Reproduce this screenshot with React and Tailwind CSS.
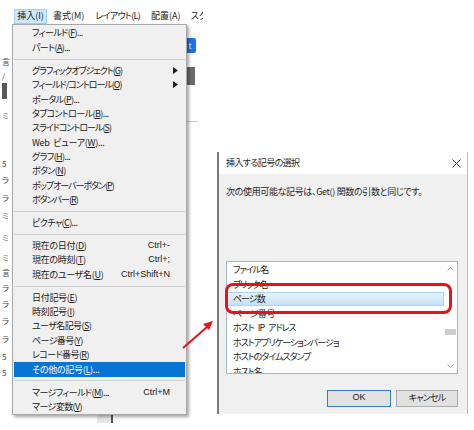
import React from 'react';

const jp = "font-['Noto_Sans_CJK_JP','Noto_Sans',sans-serif] [font-feature-settings:'palt']";

// the reference font has narrow katakana; tighten kana-heavy strings more
function tr(s) {
  const kana = (s.match(/[ァ-ヶー]/g) || []).length;
  const r = kana / s.length;
  if (r > 0.6) return 'tracking-[-1px]';
  if (r > 0.3) return 'tracking-[-0.6px]';
  return 'tracking-[-0.3px]';
}

const menu = [
  { t: 'フィールド', k: 'F', dots: true },
  { t: 'パート', k: 'A', dots: true },
  'sep',
  { t: 'グラフィックオブジェクト', k: 'G', sub: true },
  { t: 'フィールド/コントロール', k: 'O', sub: true },
  { t: 'ポータル', k: 'P', dots: true },
  { t: 'タブコントロール', k: 'B', dots: true },
  { t: 'スライドコントロール', k: 'S' },
  { t: 'Web ビューア', k: 'W', dots: true },
  { t: 'グラフ', k: 'H', dots: true },
  { t: 'ボタン', k: 'N' },
  { t: 'ポップオーバーボタン', k: 'P' },
  { t: 'ボタンバー', k: 'R' },
  'sep',
  { t: 'ピクチャ', k: 'C', dots: true },
  'sep',
  { t: '現在の日付', k: 'D', sc: 'Ctrl+-' },
  { t: '現在の時刻', k: 'T', sc: 'Ctrl+;' },
  { t: '現在のユーザ名', k: 'U', sc: 'Ctrl+Shift+N' },
  'sep',
  { t: '日付記号', k: 'E' },
  { t: '時刻記号', k: 'I' },
  { t: 'ユーザ名記号', k: 'S' },
  { t: 'ページ番号', k: 'Y' },
  { t: 'レコード番号', k: 'R' },
  { t: 'その他の記号', k: 'L', dots: true, active: true },
  'sep',
  { t: 'マージフィールド', k: 'M', dots: true, sc: 'Ctrl+M' },
  { t: 'マージ変数', k: 'V' },
];

const symbols = [
  'ファイル名',
  'ブリック名',
  'ページ数',
  'ページ番号',
  'ホスト IP アドレス',
  'ホストアプリケーションバージョ',
  'ホストのタイムスタンプ',
  'ホスト名',
];

// fragments of the window behind the menu
const edge = [
  { ch: '言', cls: 'h-[15px] mt-[30px]' },
  { ch: '/', cls: 'h-[14px]' },
  { bar: true },
  { ch: 'ミ', cls: 'h-[14px] mt-[10px]' },
  { ch: '5', cls: 'h-[14px] mt-[34px]' },
  { ch: 'ラ', cls: 'h-[18px]' },
  { ch: 'ラ', cls: 'h-[18px]' },
  { ch: 'ミ', cls: 'h-[18px]' },
  { ch: 'ミ', cls: 'h-[26px]' },
  { ch: 'ミ', cls: 'h-[14px]' },
  { ch: '言', cls: 'h-[15px]' },
  { ch: 'ラ', cls: 'h-[16px]' },
  { ch: 'ラ', cls: 'h-[16px]' },
  { ch: 'ラ', cls: 'h-[17px]' },
  { ch: 'ラ', cls: 'h-[20px]' },
  { ch: '5', cls: 'h-[16px]' },
  { ch: '5', cls: 'h-[15px]' },
];

function MenuRow({ item }) {
  const on = item.active;
  const label = `${item.t}(${item.k})${item.dots ? '...' : ''}`;
  return (
    <div
      className={`h-[14.4px] mx-px flex items-center pl-[18px] pr-[5px] ${
        on ? 'bg-[#0a73d6] text-white' : 'text-[#202020]'
      }`}
    >
      <span className={`whitespace-pre [word-spacing:2px] ${tr(label)}`}>
        {item.t}(<span className="underline underline-offset-1">{item.k}</span>){item.dots ? '...' : ''}
      </span>
      <span className="flex-1" />
      {item.sc && (
        <span className="font-['Liberation_Sans',sans-serif] text-[9px] pr-[10px] whitespace-nowrap">{item.sc}</span>
      )}
      {item.sub && (
        <svg width="5" height="7" viewBox="0 0 5 7" className="mr-[2px]">
          <path d="M0 0 L5 3.5 L0 7 Z" fill="#202020" />
        </svg>
      )}
    </div>
  );
}

export default function App() {
  return (
    <div className={`relative w-[474px] h-[430px] overflow-hidden bg-white text-[9px] ${jp}`}>
      {/* menu bar */}
      <div className="flex items-center h-[24px] pt-[8px] pl-[14px] text-[#222]">
        <div className="h-[15px] w-[33px] flex items-center justify-center bg-[#cce8ff] border border-[#99d1ff]">
          挿入(I)
        </div>
        <span className="ml-[6px]">書式(M)</span>
        <span className="ml-[11px] tracking-[-0.7px]">レイアウト(L)</span>
        <span className="ml-[11px]">配置(A)</span>
        <span className="ml-[10px] w-[12px] overflow-hidden whitespace-nowrap">スク</span>
      </div>

      {/* background window */}
      <div className="flex text-[#444]">
        <div className="w-[12px] flex flex-col overflow-hidden pl-[2px] text-[8px] leading-none">
          {edge.map((e, i) =>
            e.bar ? (
              <div key={i} className="w-[5px] h-[16px] bg-[#5a5a5a]" />
            ) : (
              <div key={i} className={`${e.cls} flex items-center`}>
                {e.ch}
              </div>
            )
          )}
        </div>
        <div className="ml-[172px] w-[14px] flex flex-col">
          <div className="mt-[14px] h-[15px] w-[12px] bg-[#1a73e8] rounded-r-[2px] flex items-center justify-center text-white text-[8px]">
            t
          </div>
          <div className="mt-[14px] h-[18px] w-[11px] bg-[#6a6a6a]" />
          <div className="mt-[36px] h-px w-[14px] bg-[#c8c8c8]" />
        </div>
      </div>
      <div className="absolute left-[97px] top-[413px] w-[16px] h-[10px] bg-[#e6e6e6] border-r-2 border-[#555]" />

      {/* insert menu */}
      <div className="absolute left-[12px] top-[24px] w-[175px] h-[391px] bg-[#f0f0f0] border border-[#a8a8a8] shadow-[2px_2px_3px_rgba(0,0,0,0.35)] pt-px">
        {menu.map((m, i) =>
          m === 'sep' ? (
            <div key={i} className="h-[8.5px] flex items-center mx-px">
              <div className="h-px w-full bg-[#cfcfcf]" />
            </div>
          ) : (
            <MenuRow key={i} item={m} />
          )
        )}
      </div>

      {/* dialog */}
      <div className="absolute left-[217px] top-[152px] w-[251px] h-[262px] flex flex-col border-l-2 border-l-[#7a7a7a] border-r border-r-[#bdbdbd] bg-[#f0f0f0] text-[#1e1e1e]">
        <div className="h-[22px] shrink-0 bg-white flex items-center justify-between pl-[7px] pr-[6px]">
          <span className="tracking-[-0.6px]">挿入する記号の選択</span>
          <svg width="9" height="9" viewBox="0 0 9 9">
            <path d="M0.5 0.5 L8.5 8.5 M8.5 0.5 L0.5 8.5" stroke="#333" strokeWidth="1" />
          </svg>
        </div>
        <div className="pl-[7px] pt-[11px] tracking-[-0.35px]">次の使用可能な記号は、Get() 関数の引数と同じです。</div>

        <div className="mt-[62px] ml-[7px] w-[232px] h-[113px] shrink-0 bg-white border border-[#a3b6c9] flex">
          <div className="flex-1 flex flex-col pt-px overflow-hidden">
            {symbols.map((s, i) => (
              <div
                key={i}
                className={`h-[14.5px] shrink-0 flex items-center whitespace-pre [word-spacing:3px] ${tr(s)} ${
                  i === 2
                    ? 'bg-gradient-to-b from-[#e8f4fc] to-[#c3e3f8] border border-[#a6d4f2] pl-[5px]'
                    : 'pl-[6px]'
                }`}
              >
                {s}
              </div>
            ))}
          </div>
          <div className="w-[13px] flex flex-col items-center">
            <div className="h-[14px] flex items-center">
              <svg width="7" height="4" viewBox="0 0 7 4">
                <path d="M0.5 3.5 L3.5 0.5 L6.5 3.5" stroke="#a6a6a6" fill="none" />
              </svg>
            </div>
            <div className="flex-1 w-full">
              <div className="mt-[53px] h-[6px] w-[11px] mx-auto bg-[#cdcdcd]" />
            </div>
            <div className="h-[14px] flex items-center">
              <svg width="7" height="4" viewBox="0 0 7 4">
                <path d="M0.5 0.5 L3.5 3.5 L6.5 0.5" stroke="#a6a6a6" fill="none" />
              </svg>
            </div>
          </div>
        </div>

        <div className="mt-[16px] flex justify-end gap-[5px] pr-[9px]">
          <div className="w-[64px] h-[17px] flex items-center justify-center bg-[#e1e1e1] border border-[#2b7fd6] font-['Liberation_Sans',sans-serif]">
            OK
          </div>
          <div className="w-[62px] h-[17px] flex items-center justify-center bg-[#e1e1e1] border border-[#adadad] tracking-[-0.8px]">
            キャンセル
          </div>
        </div>
      </div>

      {/* annotation */}
      <div className="absolute left-[225px] top-[283px] w-[227px] h-[31px] border-[3px] border-[#e3141c] rounded-[8px]" />
      <svg className="absolute left-0 top-0" width="474" height="430" viewBox="0 0 474 430">
        <line x1="183" y1="348" x2="207" y2="327" stroke="#e3141c" strokeWidth="2" />
        <path d="M213 321 L203 324 L209 330 Z" fill="#e3141c" />
      </svg>
    </div>
  );
}
